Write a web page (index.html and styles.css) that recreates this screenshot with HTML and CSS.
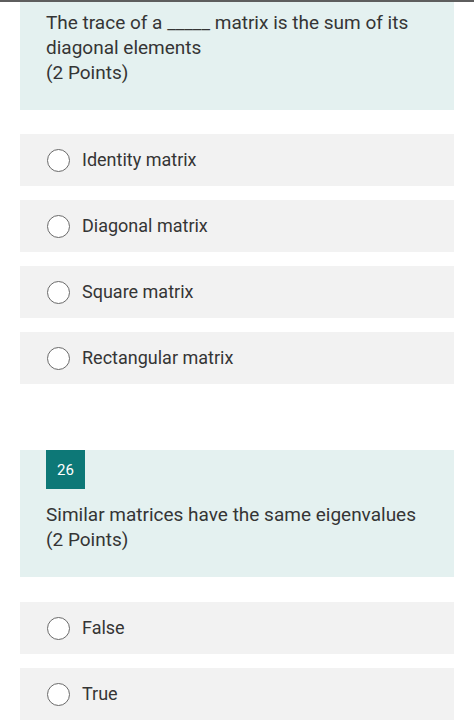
FILE: index.html
```html
<!DOCTYPE html>
<html>
<head>
<meta charset="utf-8">
<link rel="stylesheet" href="styles.css">
</head>
<body>
<div class="topbar"></div>
<main class="page">
  <section class="question first">
    <p class="qtext">The trace of a _____ matrix is the sum of its diagonal elements</p>
    <p class="points">(2 Points)</p>
  </section>
  <div class="options">
    <div class="option"><span class="radio"></span><span class="label">Identity matrix</span></div>
    <div class="option"><span class="radio"></span><span class="label">Diagonal matrix</span></div>
    <div class="option"><span class="radio"></span><span class="label">Square matrix</span></div>
    <div class="option"><span class="radio"></span><span class="label">Rectangular matrix</span></div>
  </div>

  <section class="question second">
    <div class="badge">26</div>
    <p class="qtext">Similar matrices have the same eigenvalues</p>
    <p class="points">(2 Points)</p>
  </section>
  <div class="options">
    <div class="option"><span class="radio"></span><span class="label">False</span></div>
    <div class="option"><span class="radio"></span><span class="label">True</span></div>
  </div>
</main>
</body>
</html>
```
FILE: styles.css
```css
html, body {
  margin: 0;
  padding: 0;
  background: #ffffff;
}
body {
  font-family: Roboto, "Liberation Sans", sans-serif;
  color: #353535;
}
.topbar {
  height: 2px;
  background: #5e5e5e;
}
.page {
  padding: 0 20px;
  display: flex;
  flex-direction: column;
}
.question {
  background: #e4f1f0;
  padding: 0 26px 25px 26px;
}
.question.first {
  padding-top: 8px;
}
.qtext, .points {
  margin: 0;
  font-size: 19px;
  line-height: 25px;
}
.badge {
  width: 39px;
  height: 39px;
  background: #0d7877;
  color: #ffffff;
  font-size: 15px;
  display: flex;
  align-items: center;
  justify-content: center;
  margin-bottom: 13px;
}
.options {
  display: flex;
  flex-direction: column;
  gap: 14px;
  margin-top: 24px;
}
.second + .options {
  margin-top: 25px;
}
.question.second {
  margin-top: 66px;
}
.option {
  height: 52px;
  background: #f2f2f2;
  display: flex;
  align-items: center;
  padding-left: 27px;
  gap: 12px;
}
.radio {
  width: 21px;
  height: 21px;
  border: 1.5px solid #6a6a6a;
  border-radius: 50%;
  background: #ffffff;
  flex-shrink: 0;
  margin-top: 1px;
}
.label {
  font-size: 18px;
  color: #353535;
  margin-top: -2px;
}
```
